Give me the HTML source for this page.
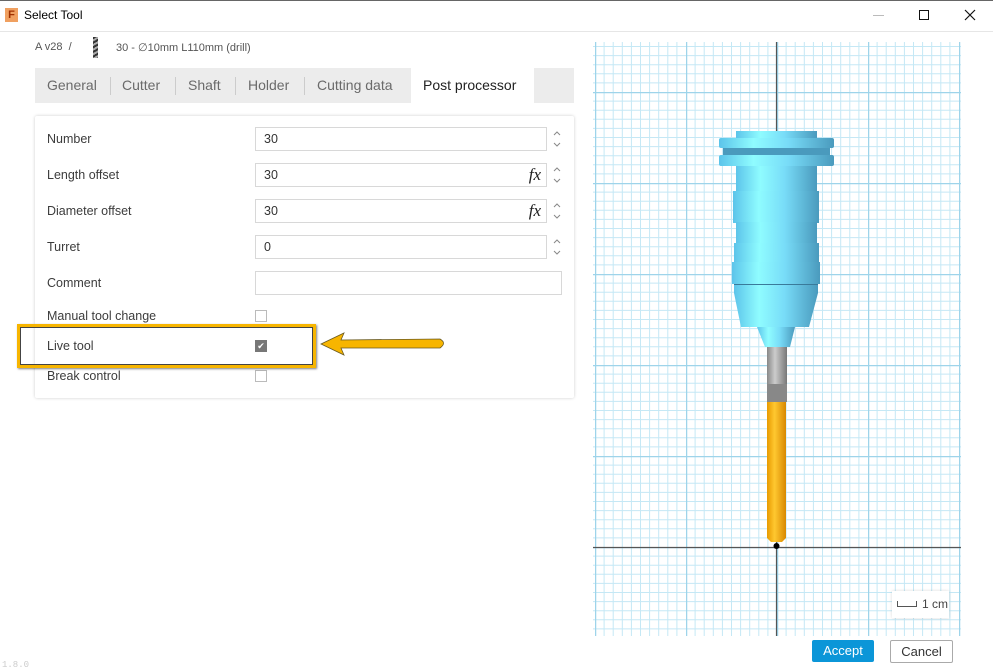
<!DOCTYPE html>
<html><head><meta charset="utf-8"><style>
*{margin:0;padding:0;box-sizing:border-box}
body{width:993px;height:670px;background:#fff;font-family:"Liberation Sans",sans-serif;position:relative;overflow:hidden;color:#333}
.a{position:absolute}
.lbl{position:absolute;left:47px;font-size:12.5px;color:#3c3c3c}
.inp{position:absolute;left:255px;width:292px;height:24px;border:1px solid #d8d8d8;font-size:12.5px;padding:4px 8px;color:#333}
.spin{position:absolute;left:552px;width:10px;height:22px}
.fx{position:absolute;right:5px;top:1px;font-family:"Liberation Serif",serif;font-style:italic;font-size:17px;color:#222}
.cb{position:absolute;left:255px;width:12px;height:12px;border:1px solid #bbb;background:#fff}
.tab{position:absolute;top:68px;height:35px;line-height:35px;font-size:14px;color:#6a6a6a}
.sep{position:absolute;top:77px;width:1px;height:18px;background:#ccc}
</style></head><body>
<div class="a" style="left:0;top:0;width:993px;height:1px;background:#666"></div>
<div class="a" style="left:5px;top:8px;width:13px;height:14px;background:#f0a060;color:#a03000;font-size:11px;font-weight:bold;line-height:14px;text-align:center">F</div>
<div class="a" style="left:24px;top:8px;font-size:12px;color:#000">Select Tool</div>
<div class="a" style="left:873px;top:15px;width:11px;height:1px;background:#bbb"></div>
<div class="a" style="left:919px;top:10px;width:10px;height:10px;border:1px solid #111"></div>
<svg class="a" style="left:964px;top:9px" width="12" height="12"><path d="M1 1L11 11M11 1L1 11" stroke="#111" stroke-width="1.2"/></svg>
<div class="a" style="left:0;top:31px;width:993px;height:1px;background:#e6e6e6"></div>

<div class="a" style="left:35px;top:41px;font-size:11px;color:#555">A v28 &nbsp;/</div>
<div class="a" style="left:93px;top:37px;width:5px;height:21px;background:repeating-linear-gradient(150deg,#333 0 2px,#aaa 2px 4px)"></div>
<div class="a" style="left:116px;top:41px;font-size:11px;color:#555">30 - ∅10mm L110mm (drill)</div>

<div class="a" style="left:35px;top:68px;width:539px;height:35px;background:#ececec"></div>
<div class="a" style="left:411px;top:68px;width:123px;height:35px;background:#fff"></div>
<div class="tab" style="left:47px">General</div><div class="sep" style="left:110px"></div>
<div class="tab" style="left:122px">Cutter</div><div class="sep" style="left:175px"></div>
<div class="tab" style="left:188px">Shaft</div><div class="sep" style="left:235px"></div>
<div class="tab" style="left:248px">Holder</div><div class="sep" style="left:304px"></div>
<div class="tab" style="left:317px">Cutting data</div>
<div class="tab" style="left:423px;color:#222">Post processor</div>

<div class="a" style="left:35px;top:116px;width:539px;height:282px;background:#fff;box-shadow:0 0 3px rgba(0,0,0,.2);border-radius:2px"></div>
<div class="lbl" style="top:132px">Number</div>
<div class="inp" style="top:127px">30</div><svg class="spin" style="top:129px"><path d="M2 6L5 3L8 6M2 14L5 17L8 14" stroke="#888" fill="none"/></svg>
<div class="lbl" style="top:168px">Length offset</div>
<div class="inp" style="top:163px">30<span class="fx">fx</span></div><svg class="spin" style="top:165px"><path d="M2 6L5 3L8 6M2 14L5 17L8 14" stroke="#888" fill="none"/></svg>
<div class="lbl" style="top:204px">Diameter offset</div>
<div class="inp" style="top:199px">30<span class="fx">fx</span></div><svg class="spin" style="top:201px"><path d="M2 6L5 3L8 6M2 14L5 17L8 14" stroke="#888" fill="none"/></svg>
<div class="lbl" style="top:240px">Turret</div>
<div class="inp" style="top:235px">0</div><svg class="spin" style="top:237px"><path d="M2 6L5 3L8 6M2 14L5 17L8 14" stroke="#888" fill="none"/></svg>
<div class="lbl" style="top:276px">Comment</div>
<div class="inp" style="top:271px;width:307px"></div>
<div class="lbl" style="top:309px">Manual tool change</div><div class="cb" style="top:310px"></div>
<div class="lbl" style="top:339px">Live tool</div>
<div class="cb" style="top:340px;background:#777;border-color:#777;color:#fff;font-size:9px;line-height:10px;text-align:center">✔</div>
<div class="lbl" style="top:369px">Break control</div><div class="cb" style="top:370px"></div>

<div class="a" style="left:17px;top:324px;width:299px;height:44px;border:3px solid #f7b500;box-shadow:1px 1px 2px rgba(0,0,0,.5),inset 0 0 0 1px #444"></div>
<svg class="a" style="left:316px;top:330px" width="132" height="28"><path d="M5 14 L28 3 L25 10 L124 9 Q131 13 124 18 L25 18 L28 25 Z" fill="#f7b500" stroke="#6a5a20" stroke-width="0.8"/></svg>

<svg class="a" style="left:593px;top:42px" width="368" height="594">
<defs><pattern id="g" x="2" y="50" width="91" height="91" patternUnits="userSpaceOnUse">
<g stroke="#c5e8f5" stroke-width="1">
<path d="M9.1 0V91M18.2 0V91M27.3 0V91M36.4 0V91M45.5 0V91M54.6 0V91M63.7 0V91M72.8 0V91M81.9 0V91M0 9.1H91M0 18.2H91M0 27.3H91M0 36.4H91M0 45.5H91M0 54.6H91M0 63.7H91M0 72.8H91M0 81.9H91"/></g>
<path d="M0.5 0V91M0 0.5H91" stroke="#9ed4ea" stroke-width="1.5"/></pattern>
<linearGradient id="b" x1="0" x2="1"><stop offset="0" stop-color="#5cc4ea"/><stop offset=".3" stop-color="#8ffcff"/><stop offset=".6" stop-color="#78dcf8"/><stop offset="1" stop-color="#4a9abd"/></linearGradient>
<linearGradient id="s" x1="0" x2="1"><stop offset="0" stop-color="#888"/><stop offset=".4" stop-color="#ccc"/><stop offset="1" stop-color="#777"/></linearGradient>
<linearGradient id="o" x1="0" x2="1"><stop offset="0" stop-color="#e89a00"/><stop offset=".4" stop-color="#ffc830"/><stop offset="1" stop-color="#d88800"/></linearGradient>
</defs>
<rect width="368" height="594" fill="#fff"/><rect width="368" height="594" fill="url(#g)"/>
<path d="M183.5 0V594M0 505.5H368" stroke="#555" stroke-width="1.2"/>
<g fill="url(#b)">
<rect x="143" y="89" width="81" height="7"/>
<rect x="126" y="96" width="115" height="10" rx="2"/>
<rect x="130" y="106" width="107" height="8" fill="#4a9abd"/>
<rect x="126" y="113" width="115" height="11" rx="2"/>
<rect x="143" y="124" width="81" height="26"/>
<rect x="140" y="149" width="86" height="32"/>
<rect x="143" y="180" width="81" height="22"/>
<rect x="141" y="201" width="85" height="20"/>
<rect x="139" y="220" width="88" height="22"/>
<rect x="141" y="242" width="84" height="9"/>
<path d="M141 251H225L216 285H148Z"/>
<path d="M164 285H202L197 305H172Z"/>
</g>
<rect x="141" y="242" width="84" height="1" fill="#3a7a9a"/>
<rect x="174" y="305" width="20" height="37" fill="url(#s)"/>
<rect x="174" y="342" width="20" height="18" fill="#888"/>
<path d="M174 360H193V496L189 500H178L174 496Z" fill="url(#o)"/>
<circle cx="183.5" cy="504" r="3" fill="#000"/>
</svg>
<div class="a" style="left:892px;top:591px;width:57px;height:27px;background:#fff;box-shadow:0 0 3px rgba(0,0,0,.15);font-size:12px;color:#444;padding:6px 0 0 30px">1 cm</div>
<div class="a" style="left:897px;top:601px;width:20px;height:6px;border:1.5px solid #555;border-top:none"></div>

<div class="a" style="left:812px;top:640px;width:62px;height:22px;background:#0b96d8;color:#fff;font-size:13px;line-height:22px;text-align:center;border-radius:2px">Accept</div>
<div class="a" style="left:890px;top:640px;width:63px;height:23px;border:1px solid #aaa;color:#333;font-size:13px;line-height:21px;text-align:center;border-radius:2px">Cancel</div>
<div class="a" style="left:2px;top:660px;font-size:9px;color:#ccc;font-family:'Liberation Mono',monospace">1.8.0</div>
</body></html>
